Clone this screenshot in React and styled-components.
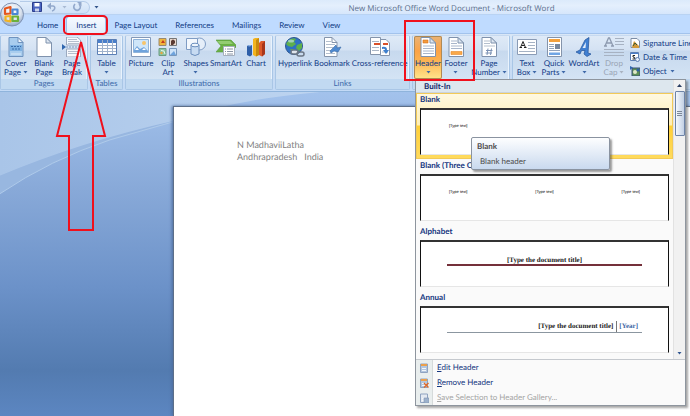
import React from "react";
import styled, { createGlobalStyle, css } from "styled-components";

const Global = createGlobalStyle`
  * { box-sizing: border-box; }
  body {
    margin: 0;
    overflow: hidden;
    font-family: Lato, "Open Sans", sans-serif;
    font-size: 8px;
    line-height: 9px;
    text-rendering: geometricPrecision;
    color: #15428b;
  }
  button {
    margin: 0;
    padding: 0;
    border: 0;
    background: none;
    color: inherit;
    font: inherit;
    white-space: nowrap;
    text-rendering: inherit;
  }
  svg { display: block; flex: none; }
`;

const ink = "#123b86";
const red = "#f0101c";

/* ---------- shell ---------- */

const Window = styled.div`
  position: relative;
  display: flex;
  flex-direction: column;
  min-height: 100vh;
  background: #bfdbff;
`;

const TitleBar = styled.header`
  display: flex;
  align-items: center;
  height: 15px;
  padding-left: 20px;
  background: linear-gradient(#dceafb, #e4effd 40%, #d6e6fb);
  border-bottom: 1px solid #b9d3f3;
`;

const QuickAccess = styled.div`
  display: flex;
  align-items: center;
  gap: 5px;
  height: 13px;
  padding: 0 7px 0 12px;
  border: 1px solid #b4cbe8;
  border-left: 0;
  border-radius: 0 7px 7px 0;
  background: linear-gradient(#e3eefb, #cfe1f7);
`;

const More = styled.button`
  padding: 0 4px;
`;

const Title = styled.h1`
  flex: 1;
  margin: 0;
  padding: 2px 0 0 110px;
  font-family: "Open Sans", sans-serif;
  font-size: 8px;
  line-height: 9px;
  font-weight: 400;
  text-align: center;
  white-space: nowrap;
  color: #5b6f8c;
`;

const OfficeButton = styled.button`
  position: absolute;
  z-index: 2;
  top: 2px;
  left: 0;
`;

const TabBar = styled.nav`
  display: flex;
  height: 18px;
  padding-left: 28px;
  background: #bfdbff;
`;

const Tab = styled.button`
  position: relative;
  padding: 2px 9px 0;
  color: ${ink};
  ${(p) =>
    p.$active &&
    css`
      margin-top: 2px;
      padding-top: 0;
      border-radius: 3px 3px 0 0;
      background: linear-gradient(#f6faff, #e2edfa);
      box-shadow: 0 0 0 1px #9fc0ea;
    `}
`;

const TabRing = styled.span`
  position: absolute;
  z-index: 3;
  inset: -2px -3px -2px -4px;
  border: 2px solid ${red};
  border-radius: 5px;
`;

const Arrow = styled.svg`
  position: absolute;
  z-index: 3;
  top: 22px;
  left: -12px;
  pointer-events: none;
`;

/* ---------- ribbon ---------- */

const Ribbon = styled.section`
  display: flex;
  gap: 2px;
  height: 59px;
  padding: 1px 0;
  background: linear-gradient(#d9e7f7, #c9dcf3 60%, #c3daf6);
  border-top: 1px solid #a3c3ec;
  border-bottom: 1px solid #8fb4dc;
`;

const GroupBox = styled.div`
  position: relative;
  display: flex;
  flex-direction: column;
  flex: ${(p) => (p.$grow ? "1 0 auto" : "none")};
  border: 1px solid #a9c6e6;
  border-top-color: #c6d9f0;
  border-radius: 2px;
  background: linear-gradient(#dfeaf7 0, #d4e2f3 14px, #c7d9ee 15px, #d8e7f6 100%);
  box-shadow: inset -1px 0 0 #e9f3fd;
`;

const GroupBody = styled.div`
  display: flex;
  flex: 1;
  padding: 0 1px;
`;

const GroupLabel = styled.div`
  height: 10px;
  line-height: 9px;
  text-align: center;
  color: #3e6aaa;
  background: #c1d9f1;
`;

const Tool = styled.button`
  display: flex;
  flex-direction: column;
  align-items: center;
  gap: 2px;
  width: ${(p) => p.$w}px;
  padding-top: 1px;
  color: ${(p) => (p.disabled ? "#9aa5b5" : ink)};
  ${(p) =>
    p.$pressed &&
    css`
      border-radius: 2px;
      background: linear-gradient(#e9b376, #fba347 35%, #fbb04f 55%, #ffe58c);
      box-shadow: inset 0 0 0 1px #b08a55;
    `}
`;

const ToolText = styled.span`
  display: flex;
  flex-direction: column;
  align-items: center;
`;

const Line = styled.span`
  display: flex;
  align-items: center;
  justify-content: center;
  gap: 2px;
  height: 9px;
`;

const SideTools = styled.div`
  display: flex;
  flex-direction: column;
  gap: 4px;
  padding: 2px 0 0 2px;
`;

const SideTool = styled.button`
  display: flex;
  align-items: center;
  gap: 3px;
  height: 10px;
  color: ${ink};
`;

const HeaderRing = styled.span`
  position: absolute;
  z-index: 6;
  top: -16px;
  left: -9px;
  width: 71px;
  height: 61px;
  border: 2px solid ${red};
  pointer-events: none;
`;

/* ---------- document ---------- */

const Workspace = styled.main`
  position: relative;
  display: flex;
  flex: 1;
  padding: 14px 0 0 173px;
  overflow: hidden;
`;

const Backdrop = styled.svg`
  position: absolute;
  inset: 0;
  width: 100%;
  height: 100%;
`;

const Sheet = styled.article`
  position: relative;
  flex: 1;
  padding: 32px 63px;
  border: 1px solid #5d6f88;
  border-width: 1px 0 0 1px;
  background: #fff;
  box-shadow: -1px 0 3px #4d6c9c;
  font-size: 9px;
  line-height: 12px;
  color: #7f7f7f;
  white-space: pre;
`;

const Para = styled.p`
  margin: 0;
`;

/* ---------- gallery menu ---------- */

const Menu = styled.div`
  position: absolute;
  z-index: 5;
  top: 43px;
  left: 2px;
  width: 271px;
  border: 1px solid #8e959e;
  background: #fafafa;
  box-shadow: 2px 2px 2px rgba(60, 60, 60, 0.45);
  color: #14286a;
`;

const Gallery = styled.div`
  display: flex;
  height: 280px;
  border-bottom: 1px solid #c5c9ce;
`;

const GalleryList = styled.div`
  flex: 1;
  min-width: 0;
`;

const GalleryHeading = styled.h2`
  margin: 0;
  height: 13px;
  padding: 2px 0 0 8px;
  font-size: 8px;
  line-height: 9px;
  font-weight: 700;
  background: #dde7ee;
  border-bottom: 1px solid #cbd3da;
`;

const Entry = styled.button`
  position: relative;
  display: block;
  width: 100%;
  padding: 0 4px 4px;
  text-align: left;
  color: #14357e;
  ${(p) =>
    p.$hot &&
    css`
      background: linear-gradient(#fff9e2, #ffefb5 32px, #ffd037 33px, #ffdb5e);
      box-shadow: inset 0 0 0 1px #f2ca58;
    `}
`;

const EntryName = styled.span`
  display: block;
  height: 15px;
  padding-top: 2px;
  font-weight: 700;
`;

const Preview = styled.span`
  display: flex;
  flex-direction: column;
  height: 47px;
  padding: 13px 26px 0;
  border: 1px solid #111;
  border-top: 2px solid #333;
  border-bottom-color: #e6e6e6;
  background: #fff;
  font-family: "Liberation Serif", serif;
  font-weight: 700;
  color: #222;
`;

const Slots = styled.span`
  display: flex;
  justify-content: space-between;
  padding: 0 2px;
  font-family: "Liberation Sans", sans-serif;
  font-weight: 400;
  font-size: 4px;
  line-height: 5px;
  color: #000;
`;

const DocTitle = styled.span`
  padding-top: 1px;
  font-size: 7px;
  line-height: 8px;
  text-align: center;
  border-bottom: 2px solid #74303a;
`;

const AnnualTitle = styled.span`
  display: flex;
  justify-content: flex-end;
  font-size: 7px;
  line-height: 11px;
  border-bottom: 1px solid #8b96a0;
`;

const Year = styled.span`
  margin-left: 3px;
  padding: 0 4px 0 2px;
  border-left: 1px solid #777;
  color: #3d66a4;
`;

const Tooltip = styled.span`
  position: absolute;
  z-index: 2;
  top: 44px;
  left: 55px;
  width: 139px;
  height: 33px;
  padding: 4px 5px;
  border: 1px solid #8a93a0;
  border-radius: 2px;
  background: linear-gradient(#fdfeff, #c9d9ee);
  box-shadow: 2px 2px 2px rgba(60, 60, 60, 0.5);
  color: #4c4c4c;
`;

const TipTitle = styled.strong`
  display: block;
`;

const TipText = styled.span`
  display: block;
  padding: 6px 0 0 3px;
`;

const Scrollbar = styled.div`
  display: flex;
  flex-direction: column;
  align-items: center;
  width: 12px;
  border-left: 1px solid #e2e2e2;
  background: #f1f1f1;
`;

const ScrollArrow = styled.button`
  display: grid;
  place-items: center;
  width: 10px;
  height: 11px;
`;

const Thumb = styled.div`
  display: grid;
  place-items: center;
  width: 10px;
  height: 45px;
  margin-bottom: auto;
  border: 1px solid #6d84a8;
  border-radius: 1px;
  background: linear-gradient(90deg, #f4f8fd, #c2d0e4);
`;

const Command = styled.button`
  display: flex;
  align-items: center;
  width: 100%;
  height: 15px;
  color: ${(p) => (p.disabled ? "#a5a5a5" : "#14357e")};
  u { text-underline-offset: 1px; }
`;

const Gutter = styled.span`
  display: grid;
  place-items: center;
  width: 17px;
  height: 15px;
  margin-right: 4px;
  background: #e9eeee;
  border-right: 1px solid #d5dada;
`;

/* ---------- icons ---------- */

const Svg = ({ size = 20, children }) => (
  <svg width={size} height={size} viewBox={`0 0 ${size} ${size}`} fill="none" aria-hidden="true">
    {children}
  </svg>
);

const Caret = ({ color = "#3f69a8", up }) => (
  <svg width="5" height="3" viewBox="0 0 5 3" aria-hidden="true">
    <path d={up ? "M0 3L2.500 0L5 3Z" : "M.5 0H4.500L2.500 2.500Z"} fill={color} />
  </svg>
);

const Leaf = ({ fill = "#fff" }) => (
  <path d="M3 .5H12L17.500 6V19.500H3Z" fill={fill} stroke="#7f92ad" />
);
const Fold = () => <path d="M12 .5V6H17.500Z" fill="#dde6f1" stroke="#7f92ad" />;

const icons = {
  cover: (
    <Svg>
      <path d="M3 .5H12L17 5.500V19.500H3Z" fill="#a9cdee" stroke="#6f93bf" />
      <path d="M12 .5V5.500H17Z" fill="#eef5fc" stroke="#6f93bf" />
      <path d="M4 8H16V14H4Z" fill="#7db1e2" />
      <path d="M5 9.500H15M6 12H14" stroke="#3a6ca8" strokeDasharray="2 1" />
      <path d="M5 17H15" stroke="#dcebf9" />
    </Svg>
  ),
  blank: (<Svg><Leaf /><Fold /></Svg>),
  break: (
    <Svg>
      <path d="M4.500 0V8H18.500V3L15 0ZM4.500 20V12H18.500V20Z" fill="#f6f9fd" stroke="#9aa9bf" />
      <path d="M6 2.500H15M6 4.500H17M6 6.500H17M6 14.500H17M6 16.500H17" stroke="#b5bfce" />
      <path d="M4 10H19" stroke="#7f98bd" strokeDasharray="2 1" />
      <path d="M0 7L4 10L0 13Z" fill="#2f66ae" />
    </Svg>
  ),
  table: (
    <Svg>
      <path d="M.5 2.500H19.500V17.500H.5Z" fill="#fff" stroke="#5b7fb5" />
      <path d="M1 3H19V6H1Z" fill="#4a7fca" />
      <path d="M5.500 3V17M10.500 3V17M15.500 3V17M1 8.500H19M1 11.500H19M1 14.500H19" stroke="#9fb2cc" />
    </Svg>
  ),
  picture: (
    <Svg>
      <path d="M.5 .5H19.500V19.500H.5Z" fill="#fff" stroke="#8298b8" />
      <path d="M2.500 2.500H17.500V15.500H2.500Z" fill="#cfe6f9" stroke="#8fb3da" />
      <circle cx="13" cy="6" r="2" fill="#f7c56a" />
      <path d="M3 13L6 9L9 12L13 10L17 14V15H3Z" fill="#6fa3dc" />
      <path d="M4 13L6 10.500L8 13ZM11 13L13 11L15 13Z" fill="#fff" />
    </Svg>
  ),
  clip: (
    <Svg>
      <path d="M1 1.500H8V8.500H1Z" fill="#f0b63c" stroke="#9a8a70" />
      <path d="M3 6L5 3L7 6Z" fill="#c33b20" />
      <path d="M11.500 1.500H18.500V8.500H11.500Z" fill="#ead9cd" stroke="#777" />
      <path d="M13 8V4Q15 1 17 4V6L15 8Z" fill="#5b3b32" />
      <path d="M1 11.500H8V18.500H1Z" fill="#8cc7a4" stroke="#6d9a80" />
      <circle cx="3.500" cy="16" r="1.200" fill="#eaa33c" />
      <path d="M3 13.500L6 14L7 17" stroke="#e8f6ec" />
      <path d="M11.500 11.500H18.500V18.500H11.500Z" fill="#cfe3f8" stroke="#7796bb" />
      <path d="M12 18L16 14L18 18Z" fill="#6fa3dc" />
    </Svg>
  ),
  shapes: (
    <Svg>
      <circle cx="13.500" cy="7" r="6" fill="#e5eef9" stroke="#7f9cc4" />
      <path d="M.5 1.500H11.500V12.500H.5Z" fill="#f4f8fd" stroke="#7f9cc4" />
      <path d="M5 8V17Q9 20 13 17V8Z" fill="#c7dbf2" stroke="#6c8fbe" />
      <ellipse cx="9" cy="8" rx="4" ry="1.800" fill="#eef5fc" stroke="#6c8fbe" />
    </Svg>
  ),
  smart: (
    <Svg>
      <path d="M0 3H15L20 8V10L15 15H0L5 9Z" fill="#69b045" stroke="#5c9c40" strokeWidth=".6" />
      <path d="M1 4H14L17 7H4Z" fill="#93cd72" />
      <path d="M7.500 9.500H18.500V18.500H7.500Z" fill="#fff" stroke="#a5afbd" />
      <path d="M9 12H10M11 12H17M9 14.500H10M11 14.500H17M9 17H10M11 17H17" stroke="#8b96a6" />
    </Svg>
  ),
  chart: (
    <Svg>
      <path d="M1 9L3 8H6V18L4 19.500L1 18Z" fill="#2e5fa8" />
      <path d="M1 9L3 8H6L4 9.500Z" fill="#8fb4e6" />
      <path d="M7 2L9 1H13V18L10 19.500L7 18Z" fill="#f3b41f" />
      <path d="M10 3L13 1V18L10 19.500Z" fill="#c98a0d" />
      <path d="M13 6L15 4H19V17L16 19.500L13 18Z" fill="#dd5a2a" />
      <path d="M16 7L19 4V17L16 19.500Z" fill="#a9371a" />
    </Svg>
  ),
  link: (
    <Svg>
      <circle cx="9" cy="9" r="8.500" fill="#2f71c4" stroke="#2b5590" />
      <path d="M3 4Q7 0 11 2L9 5L11 7L7 10L3 9L1 7ZM12 8L17 6V11L14 14L11 11ZM5 12L9 12L8 16Z" fill="#5eb04c" />
      <ellipse cx="6" cy="4" rx="3" ry="1.500" fill="#cfe8f8" opacity=".6" />
      <rect x="6" y="13" width="7" height="4" rx="2" stroke="#6b7684" strokeWidth="1.500" fill="#dfe5ec" />
      <rect x="12" y="15" width="7" height="4" rx="2" stroke="#6b7684" strokeWidth="1.500" />
    </Svg>
  ),
  bookmark: (
    <Svg>
      <path d="M2.500 .5H10L15 5.500V19.500H2.500Z" fill="#fff" stroke="#8494ab" />
      <path d="M10 .5V5.500H15" stroke="#8494ab" />
      <path d="M4 4.500H9M4 7.500H13M4 10.500H11M4 13.500H9M4 16.500H13" stroke="#b4bfcd" />
      <path d="M8 14L14 8L15 11L19 10L16 15L12 14L9 16Z" fill="#4f8ad0" stroke="#3768a5" strokeWidth=".6" />
    </Svg>
  ),
  cross: (
    <Svg>
      <path d="M10.500 2.500H16L19.500 6V18.500H10.500Z" fill="#fff" stroke="#8494ab" />
      <path d="M.5 .5H10.500V17.500H.5Z" fill="#fff" stroke="#8494ab" />
      <path d="M2 4.500H9M2 10.500H9M2 13.500H9M12 15H18" stroke="#aab6c6" />
      <path d="M4 7H10" stroke="#d9502a" strokeWidth="2" />
      <path d="M13 7H18" stroke="#d9502a" strokeWidth="2" />
      <path d="M12 10Q17 9 17 13H19L16 17L13 13H15Q15 11 12 12Z" fill="#3d7fce" />
    </Svg>
  ),
  header: (
    <Svg>
      <Leaf /><Fold />
      <path d="M5 3H10V6H5Z" fill="#f29b3c" stroke="#d6701c" strokeWidth=".6" />
      <path d="M5 9H16M5 11.500H16M5 14H16M5 16.500H16" stroke="#a9b6cb" />
    </Svg>
  ),
  footer: (
    <Svg>
      <Leaf /><Fold />
      <path d="M5 4H11M5 6.500H11M5 9H16M5 11.500H16" stroke="#a9b6cb" />
      <path d="M5 14.500H16V17.500H5Z" fill="#f9a94a" stroke="#e58a2c" strokeWidth=".6" />
    </Svg>
  ),
  number: (
    <Svg>
      <Leaf /><Fold />
      <path d="M5 4H11M5 6.500H11M5 9H16" stroke="#b4bfcd" />
      <path d="M9 11.500L8 18M12.500 11.500L11.500 18M7 13.500H13.500M6.500 16H13" stroke="#7d93b5" />
    </Svg>
  ),
  textbox: (
    <Svg>
      <path d="M.5 2.500H19.500V17.500H.5Z" fill="#fff" stroke="#8a9bb5" />
      <path d="M3.500 10.500L6 4.500L8.500 10.500M4.500 8.500H7.500M2.500 10.500H5M7 10.500H9.500" stroke="#222" />
      <path d="M11 5.500H18M11 8.500H18M11 11.500H18M2 14.500H18" stroke="#a5b2c4" />
    </Svg>
  ),
  quick: (
    <Svg>
      <path d="M3.500 .5H17.500V19.500H3.500Z" fill="#fff" stroke="#8494ab" />
      <path d="M5 2H16V5H5Z" fill="#f3a13d" />
      <path d="M5 7.500H10M5 9.500H10M5 11.500H10M5 13.500H16" stroke="#93a3ba" />
      <path d="M11 7H16V12H11Z" fill="#77879e" />
      <path d="M5 15.500H16V18H5Z" fill="#6fa5e4" />
    </Svg>
  ),
  wordart: (
    <Svg>
      <path d="M2 15L6 13L11 3L15 .5L14 16L17 17L13 19.500L10 17L11 13.500H7.500L6 17Z" fill="#3f7fd2" stroke="#2b5a9f" strokeWidth=".8" />
      <path d="M8.500 11L12 5L11.500 11Z" fill="#e3eefb" />
    </Svg>
  ),
  dropcap: (
    <Svg>
      <path d="M1 9L4.500 1H5.500L9 9M2.500 6H7.500M0 9H3M7 9H10" stroke="#8e9bb0" strokeWidth="1.300" />
      <path d="M11 1.500H20M11 4.500H20M11 7.500H20M0 12.500H20M0 15.500H20M0 18.500H20" stroke="#a7b2c2" />
    </Svg>
  ),
};

const signIcon = (
  <Svg size={10}>
    <path d="M1 .5H7L9.500 3V9.500H1Z" fill="#fff" stroke="#7d8da5" />
    <path d="M2 9L4 3L6 5L9 8V10H3Z" fill="#d39a39" />
    <path d="M3 8L5 5L7 7" stroke="#3a5634" />
  </Svg>
);
const dateIcon = (
  <Svg size={10}>
    <path d="M.5 .5H8.500V8.500H.5Z" fill="#fff" stroke="#5e7fb2" />
    <path d="M1 1.500H8" stroke="#4a7fca" />
    <path d="M5 3.500H3V5Q5.500 5 5 7H2.500" stroke="#222" />
    <circle cx="7.500" cy="7.500" r="2" fill="#e9f1fb" stroke="#5e7fb2" />
  </Svg>
);
const objectIcon = (
  <Svg size={10}>
    <path d="M2 2H10V10H2Z" fill="#5d8f55" stroke="#36507a" />
    <circle cx="5" cy="6" r="2" fill="#dfe8c8" />
    <circle cx="8" cy="4" r="1.500" fill="#2e5fa8" />
    <path d="M0 0L3 1.500L0 4Z" fill="#2f66ae" />
  </Svg>
);

const PageGlyph = ({ mark }) => (
  <Svg size={10}>
    <path d="M1.500 1H8.500V9.500H1.500Z" fill={mark === "save" ? "#e3e9f1" : "#b3c7e0"} stroke="#8fa3c0" />
    {mark !== "save" && <path d="M2 2H8" stroke="#eba04c" strokeWidth="2" />}
    <path d="M3 5.500H7M3 7.500H7" stroke="#f2f6fb" />
    {mark === "remove" && <path d="M5 5L9.500 9.500M9.500 5L5 9.500" stroke="#e06a2a" strokeWidth="1.400" />}
    {mark === "save" && <path d="M5 5H10V10H5Z" fill="#9db2cc" stroke="#8196b2" strokeWidth=".6" />}
  </Svg>
);

const Office = () => (
  <svg width="25" height="25" viewBox="0 0 25 25" aria-hidden="true">
    <defs>
      <radialGradient id="orb" cx=".5" cy=".35" r=".65">
        <stop offset="0" stopColor="#fff" />
        <stop offset=".6" stopColor="#dbe3ee" />
        <stop offset="1" stopColor="#8fa4c4" />
      </radialGradient>
    </defs>
    <circle cx="12" cy="12.500" r="11.500" fill="url(#orb)" stroke="#7f93b5" />
    <g fill="none" strokeWidth="2.200" strokeLinejoin="round">
      <path d="M5 6.500L10.500 5V11.500L5 12Z" stroke="#e4571f" />
      <path d="M12.500 7.500H17.500V12H12.500Z" stroke="#4a86d6" />
      <path d="M5.500 14.500L10.500 14V19.500L5.500 18.500Z" stroke="#f2b322" />
      <path d="M12.500 14.500H18V19H12.500Z" stroke="#6bb03a" />
    </g>
  </svg>
);

const saveIcon = (
  <Svg size={10}>
    <path d="M.5 .5H9.500V9.500H.5Z" fill="#4a64c0" stroke="#2c3f8e" />
    <path d="M2.500 1H7.500V4.500H2.500Z" fill="#fff" />
    <path d="M3 6.500H7V9.500H3Z" fill="#c9d3ec" />
  </Svg>
);
const undoIcon = (
  <Svg size={10}>
    <path d="M2 4H6Q8.500 4.500 7.500 7Q7 8.500 5 9" stroke="#93a9cc" strokeWidth="1.600" />
    <path d="M0 4L4 .5V7.500Z" fill="#93a9cc" />
  </Svg>
);
const redoIcon = (
  <Svg size={10}>
    <path d="M3 2Q.5 5 3 7.500Q6 9.500 8 6.500Q9 4 7 2" stroke="#93a9cc" strokeWidth="1.600" />
    <path d="M5 0H9.500V4.500Z" fill="#93a9cc" />
  </Svg>
);

/* ---------- pieces ---------- */

const ToolButton = ({ icon, lines, w, menu, pressed, disabled }) => (
  <Tool $w={w} $pressed={pressed} disabled={disabled} aria-expanded={pressed}>
    {icons[icon]}
    <ToolText>
      {lines.map((l, i) => (
        <Line key={l}>
          {l}
          {menu && i === 1 && <Caret color={disabled ? "#a9b3c1" : undefined} />}
        </Line>
      ))}
      {menu && lines.length === 1 && <Line><Caret /></Line>}
    </ToolText>
  </Tool>
);

const Group = ({ label, tools, grow, children }) => (
  <GroupBox $grow={grow}>
    <GroupBody>
      {tools.map((t) => <ToolButton key={t.icon} {...t} />)}
      {grow && children}
    </GroupBody>
    <GroupLabel>{label}</GroupLabel>
    {!grow && children}
  </GroupBox>
);

const groups = [
  { label: "Pages", tools: [
    { icon: "cover", lines: ["Cover", "Page"], w: 28, menu: true },
    { icon: "blank", lines: ["Blank", "Page"], w: 28 },
    { icon: "break", lines: ["Page", "Break"], w: 28 },
  ] },
  { label: "Tables", tools: [{ icon: "table", lines: ["Table"], w: 29, menu: true }] },
  { label: "Illustrations", tools: [
    { icon: "picture", lines: ["Picture"], w: 28 },
    { icon: "clip", lines: ["Clip", "Art"], w: 26 },
    { icon: "shapes", lines: ["Shapes"], w: 30, menu: true },
    { icon: "smart", lines: ["SmartArt"], w: 30 },
    { icon: "chart", lines: ["Chart"], w: 30 },
  ] },
  { label: "Links", tools: [
    { icon: "link", lines: ["Hyperlink"], w: 36 },
    { icon: "bookmark", lines: ["Bookmark"], w: 38 },
    { icon: "cross", lines: ["Cross-reference"], w: 57 },
  ] },
];

const headerTools = [
  { icon: "header", lines: ["Header"], w: 28, menu: true, pressed: true },
  { icon: "footer", lines: ["Footer"], w: 28, menu: true },
  { icon: "number", lines: ["Page", "Number"], w: 38, menu: true },
];

const textTools = [
  { icon: "textbox", lines: ["Text", "Box"], w: 26, menu: true },
  { icon: "quick", lines: ["Quick", "Parts"], w: 28, menu: true },
  { icon: "wordart", lines: ["WordArt"], w: 32, menu: true },
  { icon: "dropcap", lines: ["Drop", "Cap"], w: 28, menu: true, disabled: true },
];

const HeaderMenu = () => (
  <Menu>
    <Gallery>
      <GalleryList>
        <GalleryHeading>Built-In</GalleryHeading>
        <Entry $hot>
          <EntryName>Blank</EntryName>
          <Preview><Slots><span>[Type text]</span></Slots></Preview>
          <Tooltip role="tooltip">
            <TipTitle>Blank</TipTitle>
            <TipText>Blank header</TipText>
          </Tooltip>
        </Entry>
        <Entry>
          <EntryName>Blank (Three Columns)</EntryName>
          <Preview>
            <Slots><span>[Type text]</span><span>[Type text]</span><span>[Type text]</span></Slots>
          </Preview>
        </Entry>
        <Entry>
          <EntryName>Alphabet</EntryName>
          <Preview><DocTitle>[Type the document title]</DocTitle></Preview>
        </Entry>
        <Entry>
          <EntryName>Annual</EntryName>
          <Preview>
            <AnnualTitle>[Type the document title]<Year>[Year]</Year></AnnualTitle>
          </Preview>
        </Entry>
      </GalleryList>
      <Scrollbar>
        <ScrollArrow aria-label="Scroll up"><Caret up color="#2b3f63" /></ScrollArrow>
        <Thumb>
          <Svg size={5}><path d="M0 .5H5M0 2.500H5M0 4.500H5" stroke="#7b8798" /></Svg>
        </Thumb>
        <ScrollArrow aria-label="Scroll down"><Caret color="#2f5590" /></ScrollArrow>
      </Scrollbar>
    </Gallery>
    <Command><Gutter><PageGlyph /></Gutter><span><u>E</u>dit Header</span></Command>
    <Command><Gutter><PageGlyph mark="remove" /></Gutter><span><u>R</u>emove Header</span></Command>
    <Command disabled>
      <Gutter><PageGlyph mark="save" /></Gutter>
      <span><u>S</u>ave Selection to Header Gallery...</span>
    </Command>
  </Menu>
);

export default function App() {
  return (
    <Window>
      <Global />
      <OfficeButton aria-label="Office"><Office /></OfficeButton>
      <TitleBar>
        <QuickAccess>
          <button aria-label="Save">{saveIcon}</button>
          <button aria-label="Undo">{undoIcon}</button>
          <Caret color="#a9bad3" />
          <button aria-label="Repeat">{redoIcon}</button>
        </QuickAccess>
        <More aria-label="Customize"><Caret color="#33558c" /></More>
        <Title>New Microsoft Office Word Document - Microsoft Word</Title>
      </TitleBar>
      <TabBar>
        <Tab>Home</Tab>
        <Tab $active>
          Insert
          <TabRing />
          <Arrow width="52" height="194" viewBox="0 0 52 194" fill="none" aria-hidden="true">
            <path d="M26 3L50 97H38V191H14V97H2Z" stroke={red} strokeWidth="2" />
          </Arrow>
        </Tab>
        <Tab>Page Layout</Tab>
        <Tab>References</Tab>
        <Tab>Mailings</Tab>
        <Tab>Review</Tab>
        <Tab>View</Tab>
      </TabBar>
      <Ribbon>
        {groups.map((g) => <Group key={g.label} {...g} />)}
        <Group tools={headerTools}>
          <HeaderMenu />
          <HeaderRing />
        </Group>
        <Group tools={textTools} grow>
          <SideTools>
            <SideTool>{signIcon}Signature Line</SideTool>
            <SideTool>{dateIcon}Date &amp; Time</SideTool>
            <SideTool>{objectIcon}Object <Caret /></SideTool>
          </SideTools>
        </Group>
      </Ribbon>
      <Workspace>
        <Backdrop viewBox="0 0 690 325" preserveAspectRatio="none" aria-hidden="true">
          <defs>
            <linearGradient id="sky" x1="0" y1="0" x2="0" y2="1">
              <stop offset="0" stopColor="#a3c2ec" />
              <stop offset=".3" stopColor="#88a9d8" />
              <stop offset=".6" stopColor="#6c92c9" />
              <stop offset=".86" stopColor="#537bb0" />
              <stop offset="1" stopColor="#5c86c1" />
            </linearGradient>
            <linearGradient id="wave" x1="0" y1="0" x2="1" y2="0">
              <stop offset="0" stopColor="#a9c5e8" />
              <stop offset="1" stopColor="#bdd4f0" />
            </linearGradient>
          </defs>
          <path d="M0 0H690V325H0Z" fill="url(#sky)" />
          <path d="M0 102Q50 68 110 48L173 29Q80 50 0 84Z" fill="#98b7e0" />
          <path d="M0 102Q50 68 110 48L173 30" fill="none" stroke="#b0cbea" />
          <path d="M0 0H320Q230 8 173 29Q80 50 0 84Z" fill="url(#wave)" />
        </Backdrop>
        <Sheet>
          <Para>N MadhaviiLatha</Para>
          <Para>Andhrapradesh   India</Para>
        </Sheet>
      </Workspace>
    </Window>
  );
}
